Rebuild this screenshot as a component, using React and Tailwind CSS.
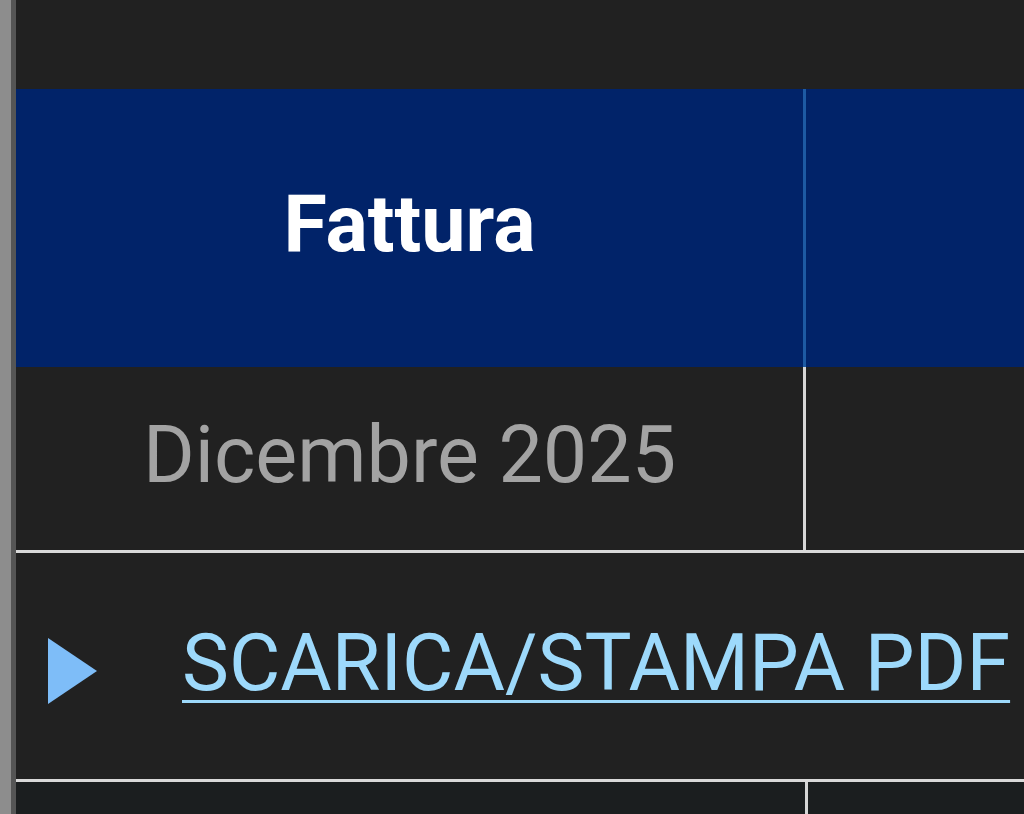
export default function App() {
  return (
    <div className="w-[1024px] h-[814px] overflow-hidden flex bg-[#212121]" style={{ fontFamily: 'Roboto, "Noto Sans", sans-serif' }}>
      {/* scrollbar strip */}
      <div className="w-[11px] flex-shrink-0 bg-[#8d8d8d]" />
      <div className="w-[5px] flex-shrink-0 bg-[#555555]" />

      <div className="flex-1 flex flex-col min-w-0">
        <div className="h-[89px] flex-shrink-0 bg-[#212121]" />

        {/* Header */}
        <div className="h-[278px] flex-shrink-0 flex bg-[#012369]">
          <div className="w-[787px] flex items-center justify-center">
            <span className="text-[79px] font-bold text-white leading-none mb-[8px]">Fattura</span>
          </div>
          <div className="w-[3px] bg-[#1d5aa3]" />
          <div className="flex-1" />
        </div>

        {/* Month row */}
        <div className="h-[183px] flex-shrink-0 flex">
          <div className="w-[787px] flex items-center justify-center">
            <span className="text-[79px] text-[#a3a3a3] leading-none mb-[6px]">Dicembre 2025</span>
          </div>
          <div className="w-[3px] bg-[#d6d6d6]" />
          <div className="flex-1" />
        </div>

        <div className="h-[3px] flex-shrink-0 bg-[#d9d9d9]" />

        {/* Download row */}
        <div className="h-[226px] flex-shrink-0 flex items-center pl-[32px] overflow-hidden">
          <svg width="49" height="66" viewBox="0 0 49 66" className="flex-shrink-0 mt-[10px]">
            <polygon points="0,0 49,33 0,66" fill="#7ebdf8" />
          </svg>
          <a
            href="#"
            className="ml-[85px] mb-[6px] text-[79px] leading-none text-[#9dd9fb] underline decoration-[3px] underline-offset-[10px] whitespace-nowrap"
          >
            SCARICA/STAMPA PDF
          </a>
        </div>

        <div className="h-[3px] flex-shrink-0 bg-[#d9d9d9]" />

        {/* Next row */}
        <div className="flex-1 flex bg-[#1b1e1f]">
          <div className="w-[789px]" />
          <div className="w-[3px] bg-[#d6d6d6]" />
          <div className="flex-1" />
        </div>
      </div>
    </div>
  );
}
